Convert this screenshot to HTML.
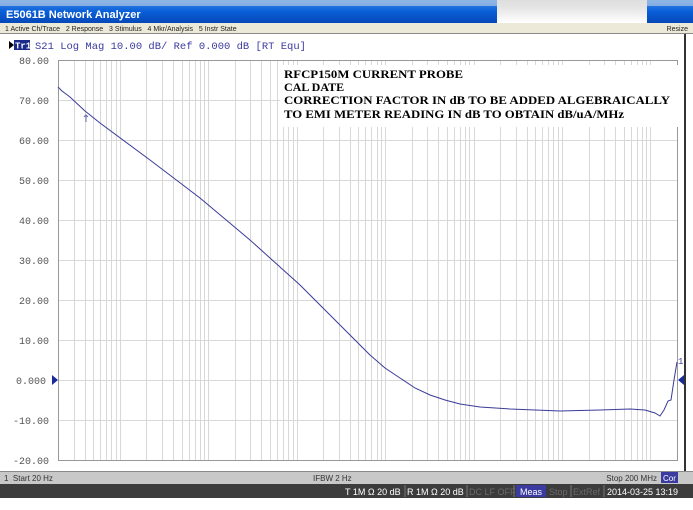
<!DOCTYPE html>
<html><head><meta charset="utf-8"><style>
html,body{margin:0;padding:0;background:#fff;width:693px;height:510px;overflow:hidden}
svg{display:block}
.m{font-family:"Liberation Mono",monospace}
.s{font-family:"Liberation Sans",sans-serif}
.b{font-family:"Liberation Serif",serif;font-weight:bold;font-size:12px}
</style></head><body>
<svg width="693" height="510" viewBox="0 0 693 510" xmlns="http://www.w3.org/2000/svg">
<defs>
<linearGradient id="tb" x1="0" y1="0" x2="0" y2="1">
<stop offset="0" stop-color="#3a8ae8"/><stop offset="0.5" stop-color="#0a5fd8"/><stop offset="1" stop-color="#0648b8"/>
</linearGradient>
<linearGradient id="gw" x1="0" y1="0" x2="0" y2="1">
<stop offset="0" stop-color="#d8d8d8"/><stop offset="1" stop-color="#ffffff"/>
</linearGradient>
</defs>
<rect x="0" y="0" width="693" height="510" fill="#fff"/>
<rect x="0" y="0" width="693" height="23" fill="url(#tb)"/>
<rect x="497" y="0" width="150" height="23" fill="url(#gw)"/>
<rect x="0" y="0" width="693" height="6" fill="#e4e4e4" opacity="0.5"/>
<text x="6" y="18" class="s" font-size="11" font-weight="bold" fill="#fff">E5061B Network Analyzer</text>
<rect x="0" y="23" width="693" height="10" fill="#ece9d8"/>
<text x="5" y="31" class="s" font-size="7" fill="#222">1 Active Ch/Trace&#160;&#160;&#160;2 Response&#160;&#160;&#160;3 Stimulus&#160;&#160;&#160;4 Mkr/Analysis&#160;&#160;&#160;5 Instr State</text>
<text x="688" y="31" class="s" font-size="7" fill="#222" text-anchor="end">Resize</text>
<rect x="0" y="33" width="693" height="1" fill="#888"/>
<rect x="683" y="34" width="10" height="450" fill="#fff"/>
<rect x="684" y="34" width="2" height="450" fill="#333"/>
<path d="M9 41 L14 45 L9 49Z" fill="#000"/>
<rect x="14" y="40" width="16" height="10" fill="#1a2a8a"/>
<text x="15" y="48.5" class="m" font-size="9" font-weight="bold" fill="#fff">Tr1</text>
<text x="35" y="49" class="m" font-size="10.5" fill="#3a3aa0">S21 Log Mag 10.00 dB/ Ref 0.000 dB [RT Equ]</text>
<g id="grid" stroke="#d8d8d8" stroke-width="1"></g>
<rect x="58.5" y="60.5" width="619" height="400" fill="none" stroke="#999"/>
<g class="m" font-size="10" fill="#555" text-anchor="end">
<text x="49" y="64">80.00</text><text x="49" y="104">70.00</text><text x="49" y="144">60.00</text>
<text x="49" y="184">50.00</text><text x="49" y="224">40.00</text><text x="49" y="264">30.00</text>
<text x="49" y="304">20.00</text><text x="49" y="344">10.00</text><text x="46" y="384">0.000</text>
<text x="49" y="424">-10.00</text><text x="49" y="464">-20.00</text>
</g>
<path d="M52 375 L58 380 L52 385Z" fill="#1a2a9a"/>
<path d="M684 375 L678 380 L684 385Z" fill="#1a2a9a"/>
<rect x="280" y="65" width="398" height="62" fill="#fff"/>
<text x="284" y="78" class="b" textLength="179" lengthAdjust="spacingAndGlyphs">RFCP150M CURRENT PROBE</text>
<text x="284" y="91" class="b">CAL DATE</text>
<text x="284" y="104" class="b" textLength="386" lengthAdjust="spacingAndGlyphs">CORRECTION FACTOR IN dB TO BE ADDED ALGEBRAICALLY</text>
<text x="284" y="118" class="b" textLength="340" lengthAdjust="spacingAndGlyphs">TO EMI METER READING IN dB TO OBTAIN dB/uA/MHz</text>
<polyline fill="none" stroke="#3a3a9a" stroke-width="1" points="58,87 62,91 70,97 85,111 100,123 150,160 200,198 250,240 300,285 330,315 350,335 370,355 385,368 400,378 415,388 430,395 445,400 460,404 480,407 510,409 560,411 600,410 630,409 645,410 655,413 660,416 664,410 668,401 671,400 674,380 677,362"/>
<path d="M86 122 L86 115 M84 117 L86 115 L88 117" stroke="#6a6ab0" fill="none" stroke-width="1"/>
<text x="678" y="364" class="m" font-size="9" fill="#3a3a9a">1</text>
<rect x="0" y="471" width="693" height="13" fill="#c8c8c8"/>
<rect x="0" y="471" width="693" height="1" fill="#888"/>
<text x="4" y="481" class="s" font-size="8" fill="#333">1&#160;&#160;Start 20 Hz</text>
<text x="313" y="481" class="s" font-size="8" fill="#333">IFBW 2 Hz</text>
<text x="657" y="481" class="s" font-size="8" fill="#333" text-anchor="end">Stop 200 MHz</text>
<rect x="661" y="472" width="17" height="11" fill="#3a3aa0"/>
<text x="663" y="481" class="s" font-size="8" fill="#fff">Cor</text>
<rect x="0" y="484" width="693" height="14" fill="#3c3c3c"/>
<g class="s" font-size="9">
<text x="345" y="495" fill="#fff">T 1M Ω 20 dB</text>
<text x="407" y="495" fill="#fff">R 1M Ω 20 dB</text>
<text x="469" y="495" fill="#6a6a6a">DC LF OFF</text>
<rect x="516" y="485" width="30" height="12" fill="#3a3aa0"/>
<text x="520" y="495" fill="#fff">Meas</text>
<text x="549" y="495" fill="#6a6a6a">Stop</text>
<text x="573" y="495" fill="#6a6a6a">ExtRef</text>
<text x="607" y="495" fill="#fff">2014-03-25 13:19</text>
</g>
<g stroke="#777"><line x1="405" y1="485" x2="405" y2="497"/><line x1="467" y1="485" x2="467" y2="497"/><line x1="514" y1="485" x2="514" y2="497"/><line x1="571" y1="485" x2="571" y2="497"/><line x1="604" y1="485" x2="604" y2="497"/></g>
</svg>
<script>
var g=document.getElementById('grid'),s='',ppd=619/7;
for(var i=1;i<10;i++){var y=60.5+i*40;s+='<line x1="58" y1="'+y+'" x2="678" y2="'+y+'"/>';}
for(var e=1;e<=8;e++){for(var m=1;m<=9;m++){var f=m*Math.pow(10,e);if(f<=20||f>=2e8)continue;var x=Math.round(58+Math.log10(f/20)*ppd)+0.5;s+='<line x1="'+x+'" y1="60" x2="'+x+'" y2="460"/>';}}
g.innerHTML=s;
</script>
</body></html>
